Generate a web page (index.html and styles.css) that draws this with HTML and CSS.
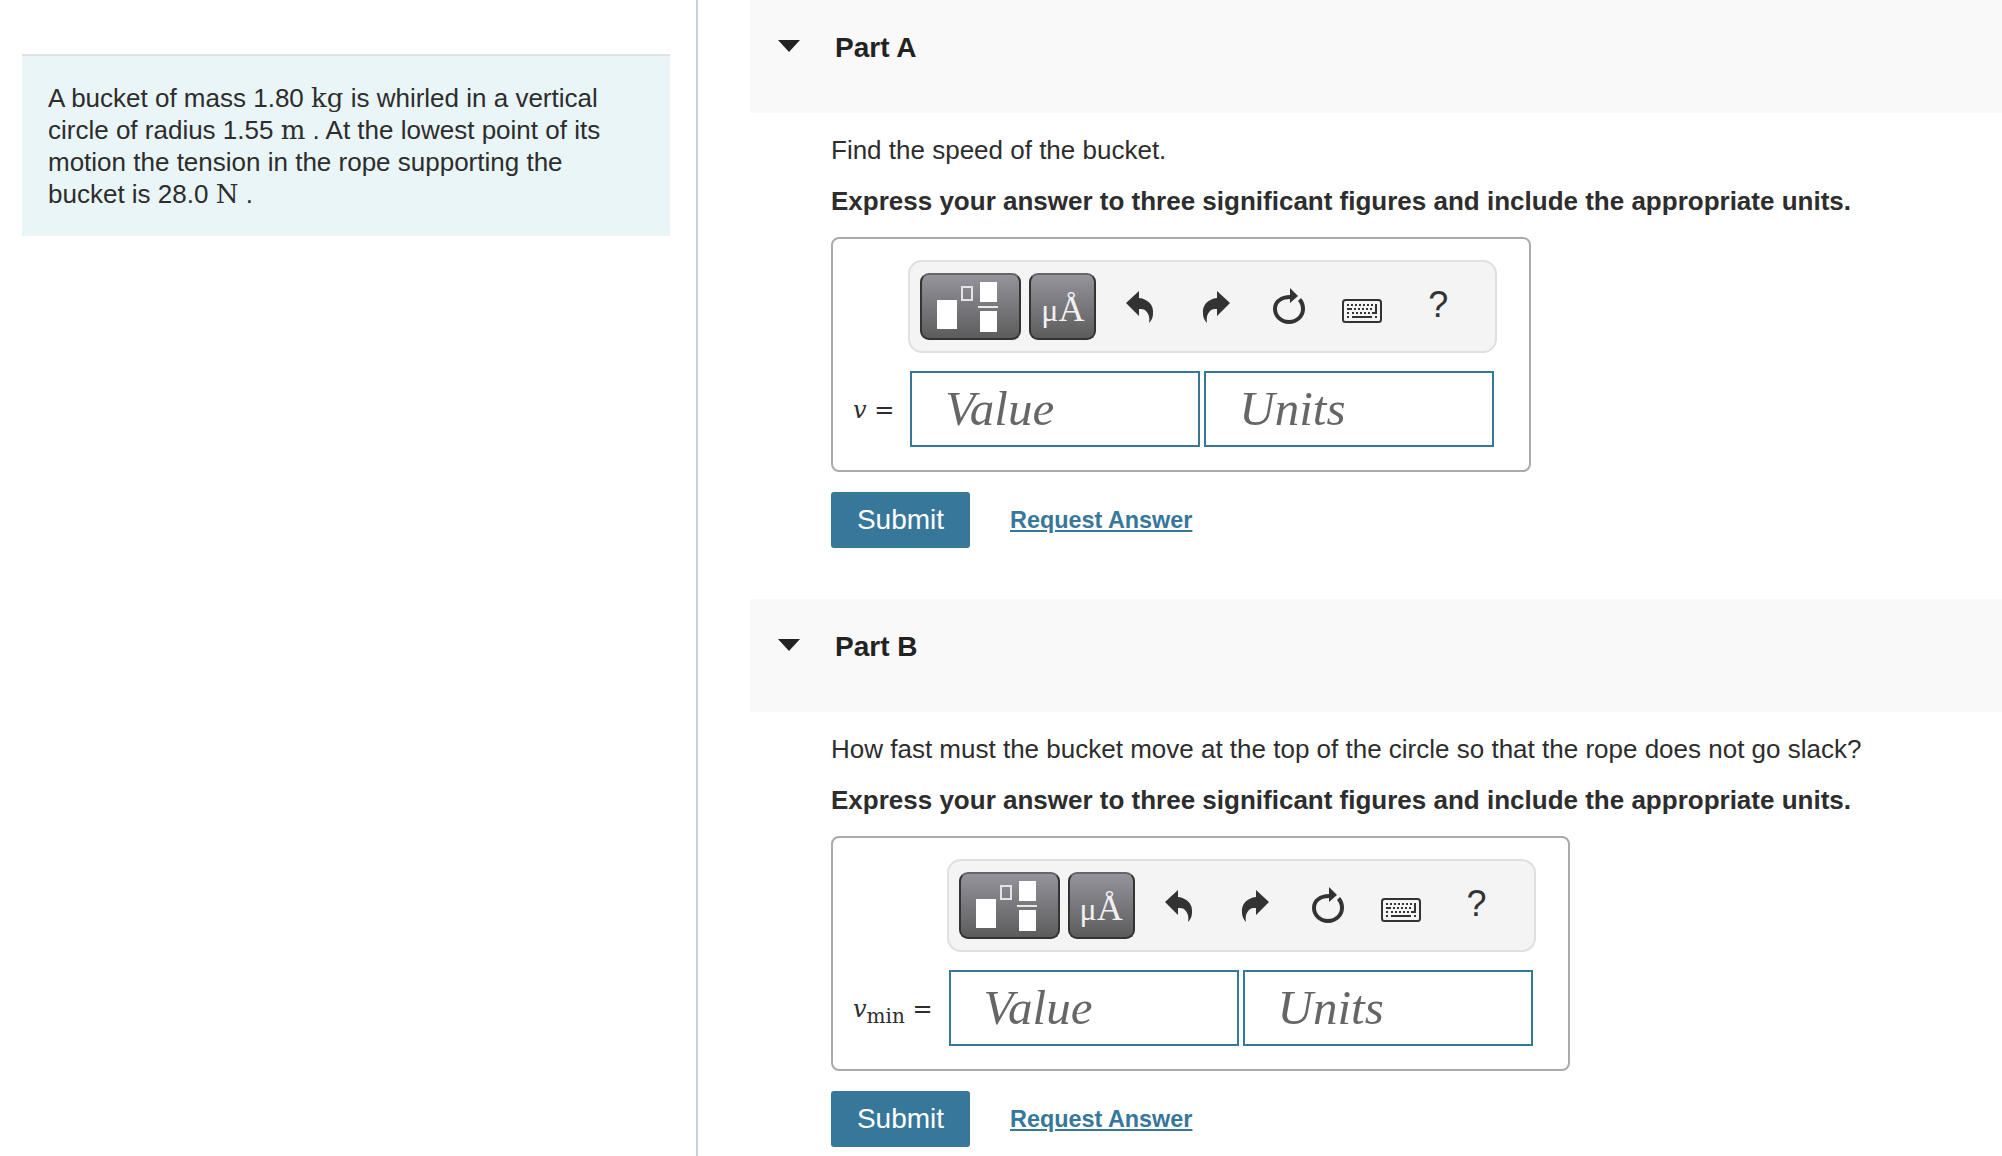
FILE: index.html
```html
<!DOCTYPE html>
<html lang="en">
<head>
  <meta charset="UTF-8" />
  <title>Part A and Part B</title>
  <link rel="stylesheet" href="styles.css">
</head>
<body>
  <svg class="sprites" width="0" height="0" aria-hidden="true">
    <symbol id="i-undo" viewBox="0 0 28 32">
      <path d="M0 12 L13 0 V7 C22 8 28 14 27 23 C27 27 25 30 23 32 C24 27 23 23 20 20 C18 18 16 18 13 18 V25 Z"/>
    </symbol>
    <symbol id="i-redo" viewBox="0 0 28 32">
      <path d="M28 12 L15 0 V7 C6 8 0 14 1 23 C1 27 3 30 5 32 C4 27 5 23 8 20 C10 18 12 18 15 18 V25 Z"/>
    </symbol>
    <symbol id="i-reload" viewBox="0 0 32 36">
      <path d="M17 0 L25 8 L17 15 V11 C10 11 4 14 4 21 C4 27 9 32 16 32 C23 32 28 27 28 21 C28 18 27 15 25 13 L28 10 C31 13 32 17 32 21 C32 29 25 36 16 36 C7 36 0 29 0 21 C0 12 8 7 17 7 Z"/>
    </symbol>
    <symbol id="i-keys" viewBox="0 0 40 24">
      <rect x="1" y="1" width="38" height="22" rx="2.5" fill="none" stroke="currentColor" stroke-width="2"/>
      <path d="M5 5h2v2h-2zM9 5h2v2h-2zM13 5h2v2h-2zM17 5h2v2h-2zM21 5h2v2h-2zM25 5h2v2h-2zM29 5h2v2h-2zM33 5h2v4h-2zM5 9h5v2h-5zM12 9h2v2h-2zM16 9h2v2h-2zM20 9h2v2h-2zM24 9h2v2h-2zM28 9h2v2h-2zM33 9h2v6h-5v-2h3zM5 13h2v2h-2zM10 13h2v2h-2zM14 13h2v2h-2zM18 13h2v2h-2zM22 13h2v2h-2zM26 13h2v2h-2zM5 17h2v2h-2zM10 17h20v2h-20zM33 17h2v2h-2z"/>
    </symbol>
    <symbol id="i-template" viewBox="0 0 61 50">
      <rect x="0" y="18" width="20" height="29" fill="#fff"/>
      <rect x="25" y="5" width="10" height="13" fill="none" stroke="#e4e4e4" stroke-width="2"/>
      <rect x="43" y="0" width="17" height="20" fill="#fff"/>
      <rect x="41" y="24" width="20" height="2" fill="#e8e8e8"/>
      <rect x="43" y="29" width="17" height="21" fill="#fff"/>
    </symbol>
  </svg>

  <div class="page">
    <aside class="intro">
      <p class="intro-box">
        A bucket of mass 1.80 <span class="unit">kg</span> is whirled in a vertical
        circle of radius 1.55 <span class="unit">m</span> . At the lowest point of its
        motion the tension in the rope supporting the
        bucket is 28.0 <span class="unit">N</span> .
      </p>
    </aside>

    <main class="parts">
      <section class="part">
        <header class="part-head">
          <span class="caret"></span>
          <h2>Part A</h2>
        </header>
        <div class="part-body">
          <p class="question">Find the speed of the bucket.</p>
          <p class="hint">Express your answer to three significant figures and include the appropriate units.</p>

          <div class="answer">
            <div class="answer-label"><i>v</i> =</div>
            <div class="answer-main">
              <div class="toolbar">
                <span class="tool-btn tool-btn-wide"><svg class="template-icon"><use href="#i-template"/></svg></span>
                <span class="tool-btn"><span class="mu"><small>μ</small>Å</span></span>
                <span class="tool tool-a"><svg class="i-arrow"><use href="#i-undo"/></svg></span>
                <span class="tool tool-a"><svg class="i-arrow"><use href="#i-redo"/></svg></span>
                <span class="tool tool-b"><svg class="i-reload"><use href="#i-reload"/></svg></span>
                <span class="tool tool-a"><svg class="i-keys"><use href="#i-keys"/></svg></span>
                <span class="tool tool-a tool-help">?</span>
              </div>
              <div class="inputs">
                <div class="field">Value</div>
                <div class="field">Units</div>
              </div>
            </div>
          </div>

          <div class="actions">
            <button class="btn">Submit</button>
            <a class="request" href="#">Request Answer</a>
          </div>
        </div>
      </section>

      <section class="part">
        <header class="part-head">
          <span class="caret"></span>
          <h2>Part B</h2>
        </header>
        <div class="part-body">
          <p class="question">How fast must the bucket move at the top of the circle so that the rope does not go slack?</p>
          <p class="hint">Express your answer to three significant figures and include the appropriate units.</p>

          <div class="answer">
            <div class="answer-label"><i>v</i><sub>min</sub> =</div>
            <div class="answer-main">
              <div class="toolbar">
                <span class="tool-btn tool-btn-wide"><svg class="template-icon"><use href="#i-template"/></svg></span>
                <span class="tool-btn"><span class="mu"><small>μ</small>Å</span></span>
                <span class="tool tool-a"><svg class="i-arrow"><use href="#i-undo"/></svg></span>
                <span class="tool tool-a"><svg class="i-arrow"><use href="#i-redo"/></svg></span>
                <span class="tool tool-b"><svg class="i-reload"><use href="#i-reload"/></svg></span>
                <span class="tool tool-a"><svg class="i-keys"><use href="#i-keys"/></svg></span>
                <span class="tool tool-a tool-help">?</span>
              </div>
              <div class="inputs">
                <div class="field">Value</div>
                <div class="field">Units</div>
              </div>
            </div>
          </div>

          <div class="actions">
            <button class="btn">Submit</button>
            <a class="request" href="#">Request Answer</a>
          </div>
        </div>
      </section>
    </main>
  </div>
</body>
</html>
```

FILE: styles.css
```css
html, body {
  margin: 0;
  padding: 0;
  height: 100%;
  overflow: hidden;
}

body {
  font-family: "Liberation Sans", Arial, sans-serif;
  font-size: 26px;
  color: #2d2d2d;
  background: #fff;
}

.sprites {
  display: block;
  height: 0;
}

.page {
  display: flex;
  min-height: 100vh;
}

/* Left column */
.intro {
  box-sizing: border-box;
  width: 698px;
  flex: none;
  padding: 54px 26px 0 22px;
  border-right: 2px solid #c5d0e0;
}

.intro-box {
  margin: 0;
  padding: 26px 40px 25px 26px;
  height: 182px;
  box-sizing: border-box;
  background: #e9f5f7;
  border-top: 2px solid #dfe3e3;
  line-height: 32px;
}

.unit {
  font-family: "DejaVu Serif", serif;
  font-size: 26px;
  line-height: 1;
}

/* Right column */
.parts {
  flex: 1;
  min-width: 0;
  padding-left: 52px;
}

.part-head {
  display: flex;
  align-items: flex-start;
  height: 113px;
  box-sizing: border-box;
  padding: 31px 0 0 28px;
  background: #f9f9f9;
}

.caret {
  width: 0;
  height: 0;
  margin-top: 9px;
  border-left: 11px solid transparent;
  border-right: 11px solid transparent;
  border-top: 12px solid #222;
}

.part-head h2 {
  margin: 0 0 0 35px;
  font-size: 28px;
  line-height: 34px;
  color: #222;
}

.part-body {
  padding: 21px 0 51px 81px;
}

.question {
  margin: 0;
  line-height: 32px;
}

.hint {
  margin: 19px 0 0;
  line-height: 32px;
  font-weight: bold;
}

/* Answer box */
.answer {
  display: inline-flex;
  align-items: flex-end;
  box-sizing: border-box;
  margin-top: 20px;
  padding: 21px 32px 23px 20px;
  border: 2px solid #aaa;
  border-radius: 8px;
  vertical-align: top;
}

.answer-label {
  margin-right: 14px;
  height: 76px;
  line-height: 78px;
  font-family: "DejaVu Serif", serif;
  font-size: 24px;
  white-space: nowrap;
}

.answer-label sub {
  font-size: 20px;
  line-height: 0;
}

.answer-main {
  width: 589px;
}

.toolbar {
  display: flex;
  align-items: center;
  box-sizing: border-box;
  height: 93px;
  padding: 0 0 0 10px;
  background: #f4f4f4;
  border: 2px solid #e0e0e0;
  border-radius: 14px;
}

.tool-btn {
  display: flex;
  align-items: center;
  justify-content: center;
  box-sizing: border-box;
  width: 67px;
  height: 67px;
  margin-right: 8px;
  background: linear-gradient(#95939c, #5c5c5c);
  border: 2px solid #333;
  border-top-color: #666;
  border-radius: 9px;
}

.tool-btn + .tool-btn {
  margin-right: 6px;
}

.tool-btn-wide {
  width: 101px;
}

.template-icon {
  width: 61px;
  height: 50px;
  margin-right: 6px;
}

.mu {
  font-family: "Liberation Serif", serif;
  font-size: 36px;
  line-height: 1;
  color: #f0f0f0;
  margin-top: 4px;
}

.mu small {
  font-size: 32px;
}

.tool {
  display: flex;
  align-items: center;
  justify-content: center;
  height: 67px;
  color: #333;
  fill: #333;
}

.tool-a {
  width: 76px;
}

.tool-b {
  width: 70px;
}

.tool-help {
  font-size: 36px;
  margin-top: -3px;
}

.i-arrow {
  width: 28px;
  height: 32px;
}

.i-reload {
  width: 32px;
  height: 36px;
  margin-top: -2px;
}

.i-keys {
  width: 40px;
  height: 24px;
  margin-top: 8px;
}

.inputs {
  display: flex;
  gap: 4px;
  margin-top: 18px;
  padding: 0 2px;
}

.field {
  box-sizing: border-box;
  width: 290px;
  height: 76px;
  padding-left: 33px;
  border: 2px solid #37779a;
  font-family: "Liberation Serif", serif;
  font-style: italic;
  font-size: 49px;
  line-height: 72px;
  color: #666;
}

/* Submit row */
.actions {
  display: flex;
  align-items: center;
  margin-top: 20px;
}

.btn {
  width: 139px;
  height: 56px;
  padding: 0;
  border: none;
  border-radius: 3px;
  background: #37779a;
  color: #fff;
  font-family: inherit;
  font-size: 28px;
}

.request {
  margin-left: 40px;
  color: #37779a;
  font-size: 23.4px;
  font-weight: bold;
}
```
